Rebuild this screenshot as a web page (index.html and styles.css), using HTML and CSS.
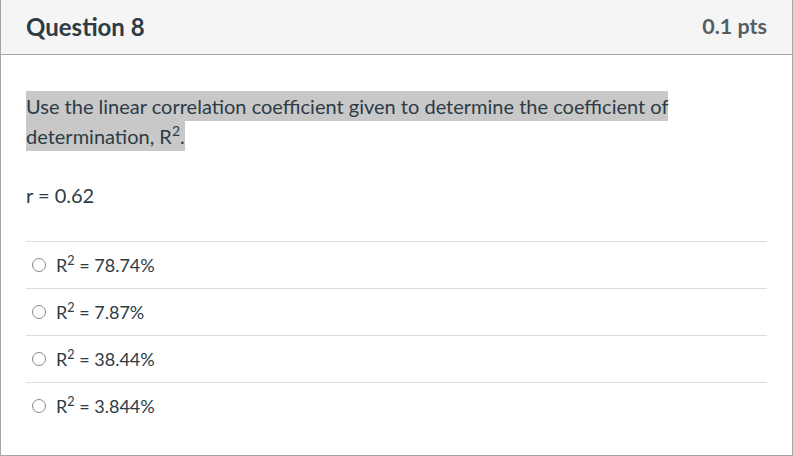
FILE: index.html
```html
<!DOCTYPE html>
<html>
<head>
<meta charset="utf-8">
<link rel="stylesheet" href="styles.css">
</head>
<body>
<div class="question">
  <div class="header">
    <span class="name">Question 8</span>
    <span class="pts">0.1 pts</span>
  </div>
  <div class="content">
    <p class="text"><span class="hl">Use the linear correlation coefficient given to determine the coefficient of determination, R<sup>2</sup>.</span></p>
    <p class="given">r = 0.62</p>
    <div class="answers">
      <div class="answer"><span class="radio"></span><span>R<sup>2</sup> = 78.74%</span></div>
      <div class="answer"><span class="radio"></span><span>R<sup>2</sup> = 7.87%</span></div>
      <div class="answer"><span class="radio"></span><span>R<sup>2</sup> = 38.44%</span></div>
      <div class="answer"><span class="radio"></span><span>R<sup>2</sup> = 3.844%</span></div>
    </div>
  </div>
</div>
</body>
</html>
```

FILE: styles.css
```css
html, body {
  margin: 0;
  padding: 0;
  background: #fff;
}
body {
  font-family: Lato, "Open Sans", sans-serif;
  color: #2d3b45;
}
.question {
  box-sizing: border-box;
  width: 793px;
  height: 456px;
  border: 1px solid #a5a5a5;
  border-top: none;
  overflow: hidden;
}
.header {
  background: #f5f5f5;
  border-bottom: 1px solid #a5a5a5;
  display: flex;
  align-items: center;
  justify-content: space-between;
  padding: 0 25px 2px;
  box-sizing: border-box;
  height: 55px;
}
.name {
  font-size: 24px;
  font-weight: 700;
  color: #2d3b45;
}
.pts {
  font-size: 21.5px;
  font-weight: 700;
  color: #555d63;
}
.content {
  padding: 0 25px;
}
.text {
  margin: 36px 0 0;
  font-size: 20px;
  line-height: 30px;
  max-width: 680px;
}
.hl {
  background: #c8c8c8;
  padding: 3px 0;
}
.text sup, .answer sup {
  font-size: 0.7em;
  line-height: 0;
  vertical-align: 0.55em;
}
.given {
  margin: 29px 0 0;
  font-size: 20px;
  line-height: 30px;
}
.answers {
  margin-top: 31px;
}
.answer {
  box-sizing: border-box;
  border-top: 1px solid #dcdcdc;
  height: 47px;
  display: flex;
  align-items: center;
  gap: 10px;
  padding: 0 0 1px 6px;
  font-size: 18px;
}
.radio {
  width: 12px;
  height: 12px;
  border: 1.5px solid #8a8a8a;
  border-radius: 50%;
  flex: none;
}
```
